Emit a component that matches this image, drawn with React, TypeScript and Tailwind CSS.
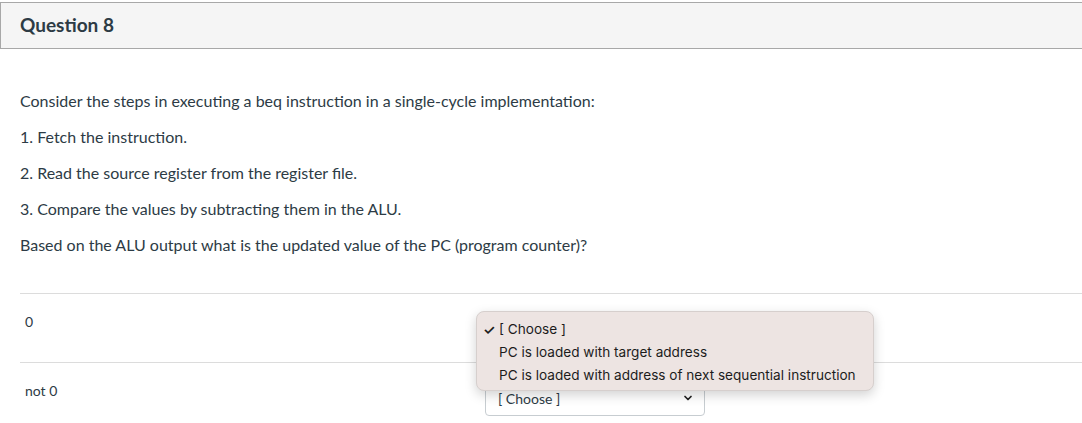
import React from 'react';
import { ChevronDown } from 'lucide-react';

const steps = [
    'Consider the steps in executing a beq instruction in a single-cycle implementation:',
    '1. Fetch the instruction.',
    '2. Read the source register from the register file.',
    '3. Compare the values by subtracting them in the ALU.',
    'Based on the ALU output what is the updated value of the PC (program counter)?',
];

const options = [
    '[ Choose ]',
    'PC is loaded with target address',
    'PC is loaded with address of next sequential instruction',
];

function Select({ hidden }: { hidden?: boolean }) {
    return (
        <div className="w-[220px] h-[36px] bg-white border border-[#c7cdd1] rounded-[4px] flex items-center justify-between pl-[12px] pr-[10px] text-[14px] text-[#2d3b45]">
            <span className={hidden ? 'invisible' : ''}>[ Choose ]</span>
            <ChevronDown className="h-3 w-3 text-[#222]" strokeWidth={3.5} />
        </div>
    );
}

function AnswerRow({ label, open }: { label: string; open?: boolean }) {
    return (
        <div className="relative flex border-t border-[#dcdcdc] h-[69px]">
            <div className="w-[465px] pl-[5px] pt-[18px] text-[14px] leading-[20px] text-[#2d3b45]">{label}</div>
            <div className="pt-[17px]">
                <Select hidden={open} />
            </div>
            {open && (
                <div className="absolute left-[456px] top-[17px] w-[398px] h-[80px] z-10 rounded-[8px] bg-[#ede4e2] border border-[#d6cfcd] shadow-[0_4px_12px_rgba(0,0,0,0.18)] pt-[6px] font-['Inter',sans-serif] text-[13.6px] text-[#1c1c1c]">
                    {options.map((o, i) => (
                        <div key={o} className="flex items-center h-[23px]">
                            <span className="w-[22px] pl-[6px] text-[14px] font-semibold">{i === 0 ? '✓' : ''}</span>
                            <span>{o}</span>
                        </div>
                    ))}
                </div>
            )}
        </div>
    );
}

export default function App() {
    return (
        <div className="w-[1082px] h-[423px] bg-white overflow-hidden font-['Lato',sans-serif] text-[#2d3b45]">
            <div className="mt-[2px] h-[47px] bg-[#f5f5f5] border-t border-b border-l border-[#a8a8a8] flex items-center pl-[19px]">
                <h2 className="text-[19px] font-bold text-[#2d3b45]">Question 8</h2>
            </div>
            <div className="pl-[20px] pt-[28px]">
                {steps.map((s) => (
                    <p key={s} className="text-[16px] leading-[24px] my-[12px]">{s}</p>
                ))}
                <div className="mt-[36px]">
                    <AnswerRow label="0" open />
                    <AnswerRow label="not 0" />
                </div>
            </div>
        </div>
    );
}
